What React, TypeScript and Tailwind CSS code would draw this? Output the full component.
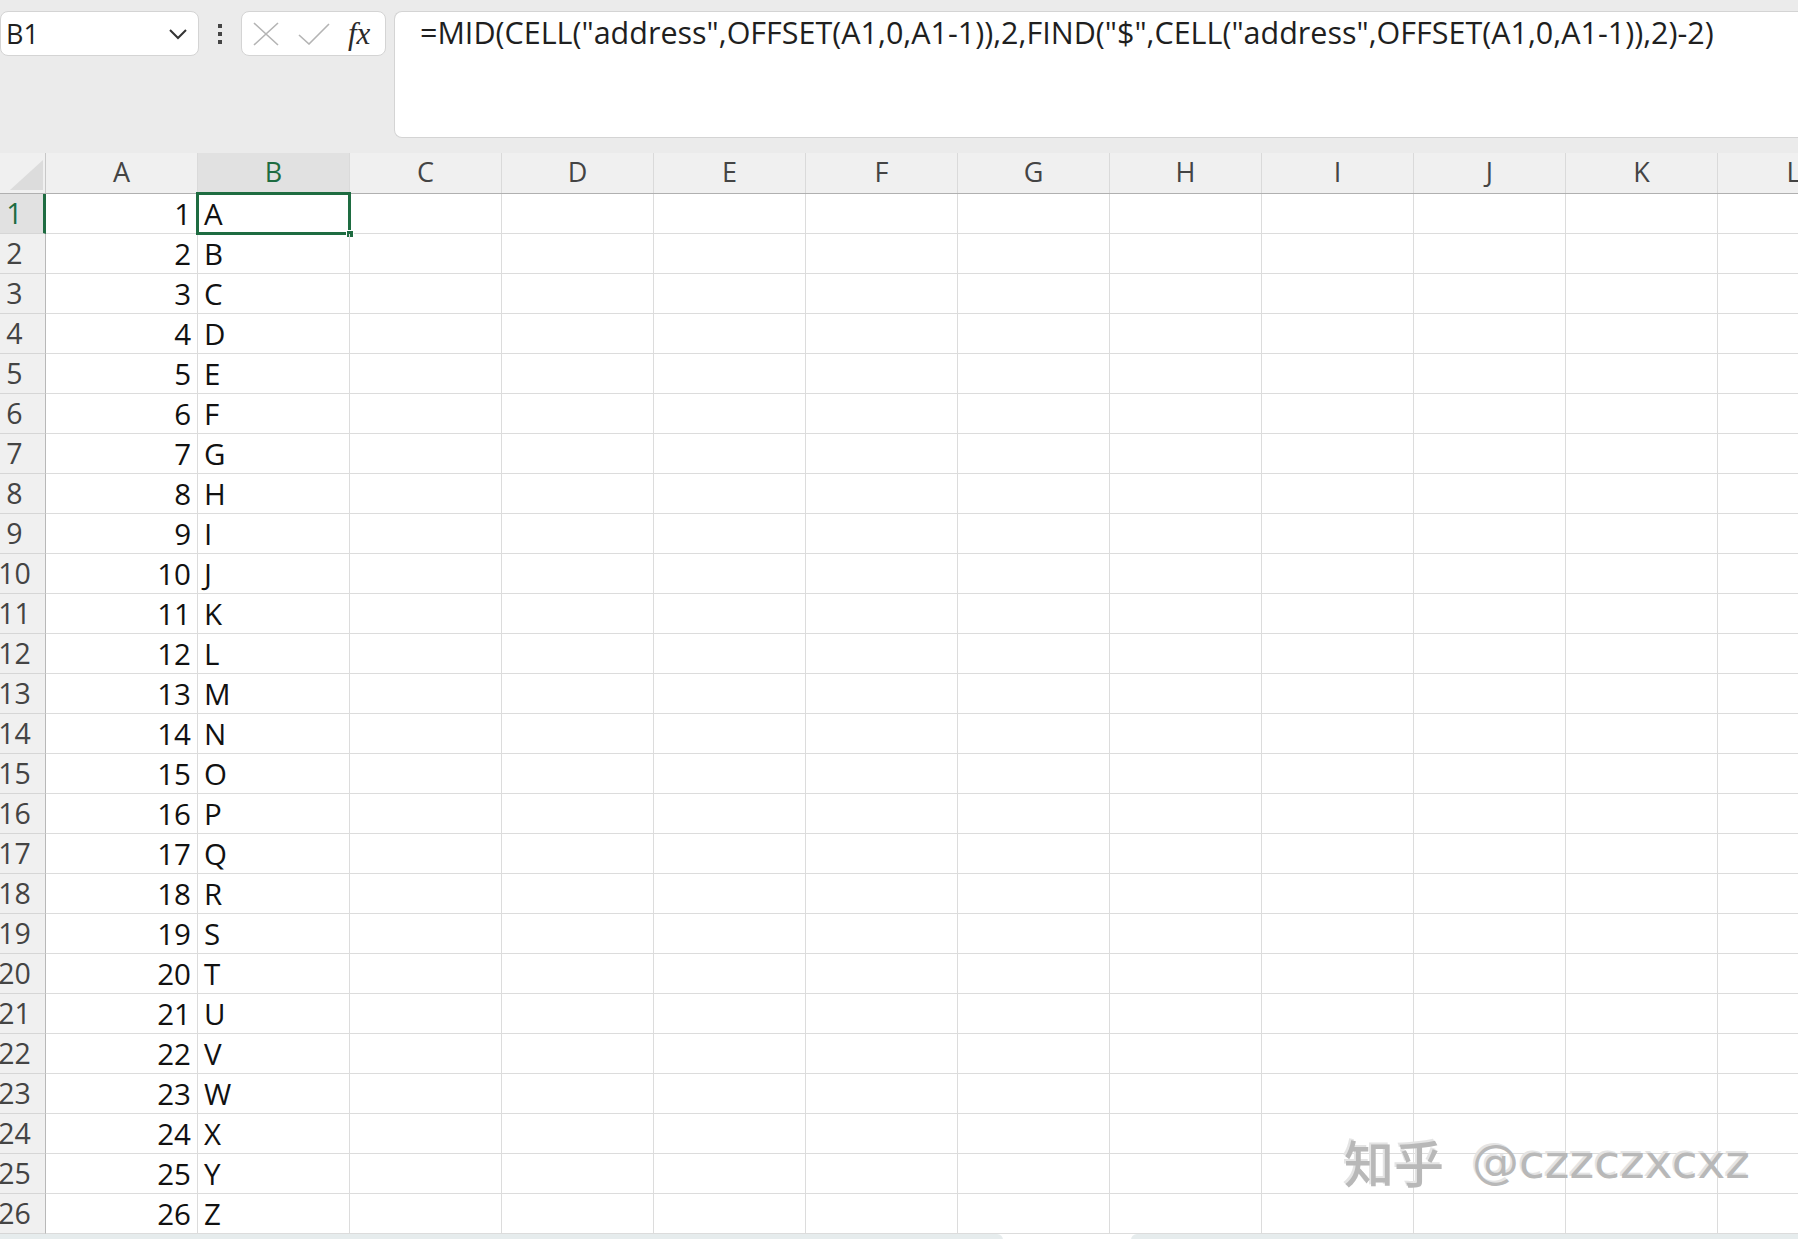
import React from 'react';

const COLS = ['A', 'B', 'C', 'D', 'E', 'F', 'G', 'H', 'I', 'J', 'K', 'L'];
const LETTERS = 'ABCDEFGHIJKLMNOPQRSTUVWXYZ'.split('');
const FORMULA = '=MID(CELL("address",OFFSET(A1,0,A1-1)),2,FIND("$",CELL("address",OFFSET(A1,0,A1-1)),2)-2)';

const font = { fontFamily: '"Open Sans", "Noto Sans", Arial, sans-serif' };

function App() {
  return (
    <div
      className="relative w-[1798px] h-[1239px] overflow-hidden bg-[#ebebeb] text-[#222]"
      style={font}
    >
      {/* formula bar */}
      <div className="flex items-start pt-[11px] h-[153px]">
        <div className="flex items-center justify-between w-[199px] h-[45px] bg-white border border-[#d4d4d4] rounded-[8px] pl-[5px] pr-[10px]">
          <span className="text-[27px] leading-none text-[#1f1f1f]">B1</span>
          <svg width="20" height="12" viewBox="0 0 20 12" fill="none">
            <path d="M2 2 L10 10 L18 2" stroke="#333" strokeWidth="2" />
          </svg>
        </div>
        <div className="flex flex-col justify-center gap-[4px] w-[42px] h-[45px] items-center">
          <span className="block w-[4px] h-[4px] bg-[#444]" />
          <span className="block w-[4px] h-[4px] bg-[#444]" />
          <span className="block w-[4px] h-[4px] bg-[#444]" />
        </div>
        <div className="flex items-center w-[145px] h-[45px] bg-white border border-[#d4d4d4] rounded-[8px] pl-[11px]">
          <svg width="26" height="24" viewBox="0 0 26 24" fill="none">
            <path d="M1 1 L25 23 M25 1 L1 23" stroke="#b4b4b4" strokeWidth="1.6" />
          </svg>
          <svg className="ml-[19px]" width="32" height="22" viewBox="0 0 32 22" fill="none">
            <path d="M1 12 L11 21 L31 1" stroke="#b4b4b4" strokeWidth="1.6" />
          </svg>
          <span
            className="ml-[18px] text-[31px] italic leading-none text-[#2a2a2a]"
            style={{ fontFamily: '"Liberation Serif", "DejaVu Serif", serif' }}
          >
            fx
          </span>
        </div>
        <div className="ml-[8px] flex-1 h-[127px] bg-white border border-[#d4d4d4] rounded-l-[8px] border-r-0 pl-[25px]">
          <span className="text-[30.5px] leading-[40px] text-[#1f1f1f] whitespace-nowrap">
            {FORMULA}
          </span>
        </div>
      </div>

      {/* column headers */}
      <div className="grid grid-cols-[46px_repeat(12,152px)] h-[41px] bg-[#f0f0f0] border-b border-[#b0b0b0]">
        <div className="relative border-r border-[#c8c8c8]">
          <svg className="absolute left-[10px] top-[7px]" width="33" height="30" viewBox="0 0 33 30">
            <path d="M33 0 L33 30 L0 30 Z" fill="#dcdcdc" />
          </svg>
        </div>
        {COLS.map(c => (
          <div
            key={c}
            className={`flex items-center justify-center pb-[3px] border-r border-[#dadada] text-[27px] leading-none ${
              c === 'B' ? 'bg-[#e1e1e1] text-[#1e6c41]' : 'text-[#444]'
            }`}
          >
            {c}
          </div>
        ))}
      </div>

      {/* rows */}
      {LETTERS.map((letter, i) => {
        const n = i + 1;
        const active = n === 1;
        return (
          <div key={n} className="grid grid-cols-[46px_repeat(12,152px)] h-[40px] bg-white">
            <div
              className={`relative flex items-center border-b ${
                active
                  ? 'bg-[#e1e1e1] text-[#1e6c41] border-r-[3px] border-r-[#1e6c41] border-b-[#d6d6d6]'
                  : 'bg-[#f0f0f0] text-[#444] border-r border-r-[#b8b8b8] border-b-[#d6d6d6]'
              }`}
            >
              <div className="w-[29px] flex justify-center whitespace-nowrap text-[28.5px] leading-none">{n}</div>
            </div>
            <div className="flex items-center justify-end pr-[6px] border-r border-b border-[#dcdcdc] text-[29.5px] leading-none text-[#111]">
              {n}
            </div>
            <div className="relative flex items-center pl-[6px] border-r border-b border-[#dcdcdc] text-[29.5px] leading-none text-[#111]">
              {letter}
              {active && (
                <>
                  <div className="absolute -left-[2px] -top-[2px] -right-[2px] -bottom-[2px] border-[3px] border-[#1e6c41]" />
                  <div className="absolute -right-[5px] -bottom-[5px] w-[8px] h-[8px] bg-[#1e6c41] border border-white" />
                </>
              )}
            </div>
            {COLS.slice(2).map(c => (
              <div key={c} className="border-r border-b border-[#dcdcdc]" />
            ))}
          </div>
        );
      })}

      {/* bottom scroll strip */}
      <div className="flex h-[6px] bg-white">
        <div className="w-[1003px] bg-[#e6eced] rounded-tr-[6px]" />
        <div className="w-[128px]" />
        <div className="flex-1 bg-[#e6eced] rounded-tl-[6px]" />
      </div>

      {/* watermark */}
      <div
        className="absolute left-[1344px] top-[1136px] flex items-center gap-[28px] text-[#b8b8b8] whitespace-nowrap"
        style={{ textShadow: '-2px -2px 0 #e4e4e4' }}
      >
        <span
          className="text-[50px] font-medium leading-none"
          style={{ fontFamily: '"Noto Sans CJK SC", sans-serif' }}
        >
          知乎
        </span>
        <span className="text-[47px] leading-none" style={{ fontFamily: '"DejaVu Sans", sans-serif' }}>
          @czzczxcxz
        </span>
      </div>
    </div>
  );
}

export default App;
